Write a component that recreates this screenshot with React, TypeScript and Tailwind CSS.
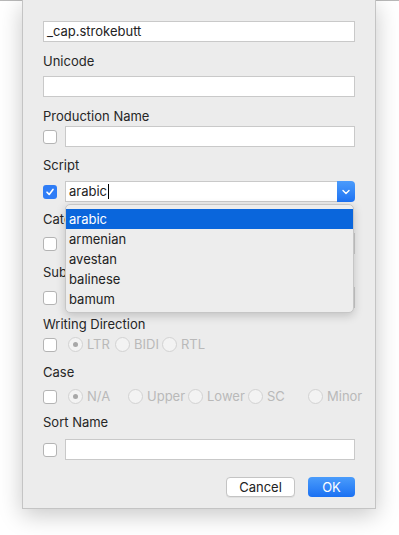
import React from 'react';

const font = { fontFamily: 'Inter, "Liberation Sans", sans-serif' };

function Field({ value, className = '' }: { value?: string; className?: string }) {
  return (
    <div
      className={`h-[21px] border border-[#c9c9c9] bg-white px-[3px] text-[13px] leading-[19px] text-[#222] ${className}`}
    >
      {value}
    </div>
  );
}

function Label({ text, className = '' }: { text: string; className?: string }) {
  return <div className={`h-4 text-[13px] leading-4 text-[#262626] ${className}`}>{text}</div>;
}

function Check({ checked = false }: { checked?: boolean }) {
  if (checked) {
    return (
      <div className="flex h-[14px] w-[14px] shrink-0 items-center justify-center rounded-[3px] bg-[#2f7df6]">
        <svg width="10" height="10" viewBox="0 0 10 10">
          <path d="M2 5.2 L4.2 7.4 L8 2.4" fill="none" stroke="white" strokeWidth="1.6" strokeLinecap="round" strokeLinejoin="round" />
        </svg>
      </div>
    );
  }
  return <div className="h-[14px] w-[14px] shrink-0 rounded-[3px] border border-[#b4b4b4] bg-white" />;
}

function Radio({ label, on = false, w }: { label: string; on?: boolean; w: string }) {
  return (
    <div className={`flex items-center ${w}`}>
      <div className="flex h-[15px] w-[15px] shrink-0 items-center justify-center rounded-full border border-[#d2d2d2] bg-[#f3f3f3]">
        {on && <div className="h-[5px] w-[5px] rounded-full bg-[#a8a8a8]" />}
      </div>
      <span className="ml-[4px] text-[13px] text-[#b9b9b9]">{label}</span>
    </div>
  );
}

const scripts = ['arabic', 'armenian', 'avestan', 'balinese', 'bamum'];

export default function App() {
  return (
    <div className="h-[535px] w-[399px] border-t border-[#b8b8b8] bg-white" style={font}>
      <div className="relative -mt-px ml-[22px] flex h-[509px] w-[354px] flex-col border border-t-0 border-[#c4c4c4] bg-[#ececec] px-[20px] shadow-[0_6px_22px_rgba(0,0,0,0.22)]">
        <Field value="_cap.strokebutt" className="mt-[21px]" />

        <Label text="Unicode" className="mt-[11px]" />
        <Field className="mt-[7px]" />

        <Label text="Production Name" className="mt-[11px]" />
        <div className="mt-[2px] flex h-[21px] items-center gap-[8px]">
          <Check />
          <Field className="flex-1" />
        </div>

        <Label text="Script" className="mt-[10px]" />
        <div className="mt-[8px] flex h-[21px] items-center gap-[8px]">
          <Check checked />
          <div className="flex h-[21px] flex-1">
            <div className="flex flex-1 items-center border border-r-0 border-[#c9c9c9] bg-white pl-[3px] text-[13px] text-[#222]">
              arabic
              <span className="ml-px h-[15px] w-px bg-black" />
            </div>
            <div className="flex w-[18px] items-center justify-center rounded-r-[4px] bg-gradient-to-b from-[#4b9bfb] to-[#1d72f3]">
              <svg width="8" height="6" viewBox="0 0 8 6">
                <path d="M1 1.5 L4 4.5 L7 1.5" fill="none" stroke="white" strokeWidth="1.4" strokeLinecap="round" strokeLinejoin="round" />
              </svg>
            </div>
          </div>
        </div>

        <Label text="Category" className="mt-[9px]" />
        <div className="mt-[6px] flex h-[21px] items-center gap-[8px]">
          <Check />
          <Field className="flex-1" />
        </div>

        <Label text="Subcategory" className="mt-[10px]" />
        <div className="mt-[7px] flex h-[21px] items-center gap-[8px]">
          <Check />
          <Field className="flex-1" />
        </div>

        <Label text="Writing Direction" className="mt-[8px]" />
        <div className="mt-[2px] flex h-[21px] items-center">
          <Check />
          <div className="ml-[11px] flex">
            <Radio label="LTR" on w="w-[47px]" />
            <Radio label="BIDI" w="w-[47px]" />
            <Radio label="RTL" w="w-[47px]" />
          </div>
        </div>

        <Label text="Case" className="mt-[9px]" />
        <div className="mt-[6px] flex h-[21px] items-center">
          <Check />
          <div className="ml-[11px] flex">
            <Radio label="N/A" on w="w-[60px]" />
            <Radio label="Upper" w="w-[60px]" />
            <Radio label="Lower" w="w-[60px]" />
            <Radio label="SC" w="w-[60px]" />
            <Radio label="Minor" w="w-[60px]" />
          </div>
        </div>

        <Label text="Sort Name" className="mt-[7px]" />
        <div className="mt-[9px] flex h-[21px] items-center gap-[8px]">
          <Check />
          <Field className="flex-1" />
        </div>

        <div className="mt-[17px] flex justify-end gap-[13px]">
          <button className="h-[20px] w-[69px] rounded-[4px] border border-[#c4c4c4] bg-white text-[13px] leading-[18px] text-[#222] shadow-[0_1px_0_rgba(0,0,0,0.05)]">
            Cancel
          </button>
          <button className="h-[20px] w-[47px] rounded-[4px] bg-gradient-to-b from-[#4a9cfb] to-[#1a70f2] text-[13px] leading-[20px] text-white">
            OK
          </button>
        </div>

        <div className="absolute left-[42px] top-[204px] h-[109px] w-[289px] rounded-[5px] border border-[#c6c6c6] bg-[#ededed] pt-[4px] shadow-[0_3px_10px_rgba(0,0,0,0.18)]">
          {scripts.map((s, i) => (
            <div
              key={s}
              className={`h-5 pl-[3px] text-[13px] leading-5 ${i === 0 ? 'bg-[#0a66dc] text-white' : 'text-[#222]'}`}
            >
              {s}
            </div>
          ))}
        </div>
      </div>
    </div>
  );
}
